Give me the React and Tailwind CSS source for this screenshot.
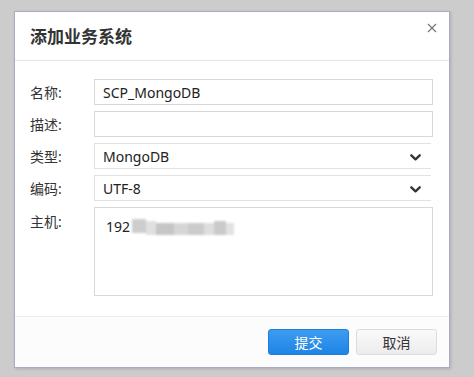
import React from "react";

const font = { fontFamily: '"Noto Sans", "Noto Sans CJK SC", sans-serif' };

function Chevron() {
  return (
    <svg width="11" height="7" viewBox="0 0 11 7" className="absolute right-[10px] top-[10px]">
      <path d="M1.3 1.3 L5.5 5.3 L9.7 1.3" fill="none" stroke="#333" strokeWidth="2.3" strokeLinecap="round" strokeLinejoin="round" />
    </svg>
  );
}

function Row({ label, children, top }) {
  return (
    <div className={`flex ${top ? "items-start" : "items-center"}`}>
      <div className={`w-[64px] shrink-0 text-[14px] text-[#333] ${top ? "pt-[4px]" : ""}`}>{label}</div>
      {children}
    </div>
  );
}

export default function App() {
  return (
    <div className="w-[474px] h-[377px] bg-[#cccccc] pt-[11px] pl-[14px] overflow-hidden" style={font}>
      <div className="w-[436px] h-[357px] bg-white border border-[#a8adc5] shadow-[1px_1px_3px_rgba(0,0,0,0.15)] flex flex-col">
        <div className="h-[49px] shrink-0 border-b border-[#e6e6e6] flex items-center justify-between pl-[15px] pr-[12px]">
          <div className="text-[17px] font-bold text-[#333] pt-[2px]">添加业务系统</div>
          <svg width="10" height="10" viewBox="0 0 10 10" className="-mt-[16px]">
            <path d="M1 1 L9 9 M9 1 L1 9" stroke="#777" strokeWidth="1.2" />
          </svg>
        </div>
        <div className="h-[255px] shrink-0 pt-[18px] pl-[15px] pr-[16px] flex flex-col gap-[6px]">
          <Row label="名称:">
            <div className="flex-1 h-[26px] border border-[#d8d8d8] flex items-center pl-[8px] text-[14px] text-[#222]">SCP_MongoDB</div>
          </Row>
          <Row label="描述:">
            <div className="flex-1 h-[26px] border border-[#d8d8d8]"></div>
          </Row>
          <Row label="类型:">
            <div className="relative flex-1 h-[26px] border-y border-l border-[#e2e2e2] mr-[2px] flex items-center pl-[8px] text-[14px] text-[#222]">
              MongoDB
              <Chevron />
            </div>
          </Row>
          <Row label="编码:">
            <div className="relative flex-1 h-[26px] border-y border-l border-[#e2e2e2] mr-[2px] flex items-center pl-[8px] text-[14px] text-[#222]">
              UTF-8
              <Chevron />
            </div>
          </Row>
          <Row label="主机:" top>
            <div className="flex-1 h-[89px] border border-[#d8d8d8] pl-[11px] pt-[8px]">
              <div className="flex items-center text-[14px] text-[#222]">
                <span className="relative">192</span>
                <div className="flex items-start ml-[2px] blur-[1px] h-[16px]">
                  <div className="w-[14px] h-[14px] bg-[#cdcdcd]"></div>
                  <div className="w-[10px] h-[14px] bg-[#e0e0e0] mt-[2px]"></div>
                  <div className="w-[18px] h-[12px] bg-[#c6c6c6] mt-[4px]"></div>
                  <div className="w-[14px] h-[12px] bg-[#d6d6d6] mt-[4px]"></div>
                  <div className="w-[16px] h-[12px] bg-[#cbcbcb] mt-[4px]"></div>
                  <div className="w-[10px] h-[12px] bg-[#dedede] mt-[4px]"></div>
                  <div className="w-[12px] h-[14px] bg-[#cacaca] mt-[2px]"></div>
                  <div className="w-[8px] h-[12px] bg-[#e2e2e2] mt-[4px]"></div>
                </div>
              </div>
            </div>
          </Row>
        </div>
        <div className="flex-1 border-t border-[#ececec] bg-[#fcfcfd] flex justify-end items-start pt-[12px] pr-[12px] gap-[7px]">
          <button className="w-[81px] h-[26px] rounded-[3px] bg-gradient-to-b from-[#3d9cf0] to-[#1d84e6] border border-[#1e7fd8] text-white text-[14px]">提交</button>
          <button className="w-[81px] h-[26px] rounded-[3px] bg-gradient-to-b from-[#fafafa] to-[#ececec] border border-[#dcdcdc] text-[#333] text-[14px]">取消</button>
        </div>
      </div>
    </div>
  );
}
